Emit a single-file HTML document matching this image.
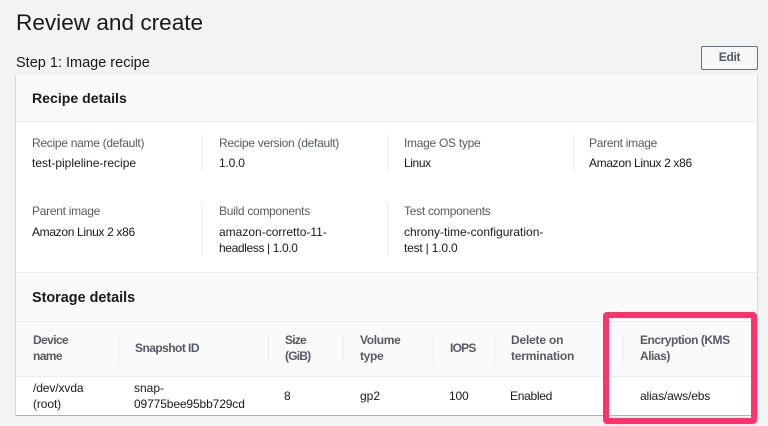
<!DOCTYPE html>
<html><head><meta charset="utf-8"><style>
html,body{margin:0;padding:0}
body{width:768px;height:426px;overflow:hidden;background:#f2f3f3;position:relative;font-family:"Liberation Sans",sans-serif;color:#16191f}
#p{position:absolute;left:0;top:0;width:768px;height:426px;filter:blur(.35px)}
.t{position:absolute;white-space:nowrap;font-size:12px;line-height:16px}
.l{color:#545b64;letter-spacing:-.28px}
.h{font-weight:700;color:#545b64;font-size:12px}
.b{position:absolute;background:#eaeded}
.v{position:absolute;width:1px;background:#eaeded}
</style></head><body><div id="p">
<div class="t" style="left:16px;top:9px;font-size:22.6px;line-height:28px">Review and create</div>
<div class="t" style="left:16px;top:54px;font-size:14.5px;line-height:18px">Step 1: Image recipe</div>
<div style="position:absolute;left:701px;top:46px;width:55px;height:22px;border:1px solid #687078;border-radius:2px;background:#f5f6f6"></div>
<div class="t h" style="left:701px;top:49px;width:57px;text-align:center;letter-spacing:-.3px">Edit</div>

<div style="position:absolute;left:15px;top:75px;width:1px;height:341px;background:#d5dbdb"></div>
<div style="position:absolute;left:16px;top:75px;width:742px;height:341px;background:#fff;border-right:1px solid #d5dbdb;border-bottom:1px solid #aab7b8;box-sizing:border-box"></div>
<div style="position:absolute;left:16px;top:75px;width:741px;height:46px;background:#fafafa"></div>
<div class="b" style="left:16px;top:121px;width:741px;height:1px"></div>
<div style="position:absolute;left:16px;top:273px;width:741px;height:103px;background:#fafafa"></div>
<div class="b" style="left:16px;top:272px;width:741px;height:1px"></div>
<div class="b" style="left:16px;top:321px;width:741px;height:1px"></div>
<div class="b" style="left:16px;top:376px;width:741px;height:1px"></div>

<div class="t" style="left:32px;top:89px;font-size:14.1px;line-height:18px;font-weight:700">Recipe details</div>
<div class="t" style="left:32px;top:289px;font-size:14.4px;line-height:18px;font-weight:700">Storage details</div>

<div class="v" style="left:201px;top:135px;height:36px"></div>
<div class="v" style="left:387px;top:135px;height:36px"></div>
<div class="v" style="left:573px;top:135px;height:36px"></div>
<div class="v" style="left:201px;top:203px;height:53px"></div>
<div class="v" style="left:387px;top:203px;height:53px"></div>

<div class="t l" style="left:32px;top:135px">Recipe name (default)</div>
<div class="t" style="left:32px;top:155px">test-pipleline-recipe</div>
<div class="t l" style="left:219px;top:135px">Recipe version (default)</div>
<div class="t" style="left:219px;top:155px;letter-spacing:-.2px">1.0.0</div>
<div class="t l" style="left:404px;top:135px">Image OS type</div>
<div class="t" style="left:404px;top:155px;letter-spacing:-.4px">Linux</div>
<div class="t l" style="left:589px;top:135px">Parent image</div>
<div class="t" style="left:589px;top:155px;letter-spacing:-.33px">Amazon Linux 2 x86</div>

<div class="t l" style="left:32px;top:203px">Parent image</div>
<div class="t" style="left:32px;top:224px;letter-spacing:-.33px">Amazon Linux 2 x86</div>
<div class="t l" style="left:219px;top:203px">Build components</div>
<div class="t" style="left:219px;top:224px">amazon-corretto-11-</div>
<div class="t" style="left:219px;top:240px;letter-spacing:-.37px">headless | 1.0.0</div>
<div class="t l" style="left:404px;top:203px">Test components</div>
<div class="t" style="left:404px;top:224px">chrony-time-configuration-</div>
<div class="t" style="left:404px;top:240px;letter-spacing:-.2px">test | 1.0.0</div>

<div class="v" style="left:118px;top:335px;height:27px"></div>
<div class="v" style="left:268px;top:335px;height:27px"></div>
<div class="v" style="left:343px;top:335px;height:27px"></div>
<div class="v" style="left:433px;top:335px;height:27px"></div>
<div class="v" style="left:494px;top:335px;height:27px"></div>
<div class="v" style="left:623px;top:335px;height:27px"></div>

<div class="t h" style="left:33px;top:332px;letter-spacing:-.6px">Device</div>
<div class="t h" style="left:33px;top:348px;letter-spacing:-.6px">name</div>
<div class="t h" style="left:135px;top:340px;letter-spacing:-.55px">Snapshot ID</div>
<div class="t h" style="left:285px;top:332px;letter-spacing:-.8px">Size</div>
<div class="t h" style="left:285px;top:348px;letter-spacing:-.8px">(GiB)</div>
<div class="t h" style="left:360px;top:332px;letter-spacing:-.33px">Volume</div>
<div class="t h" style="left:360px;top:348px;letter-spacing:-.33px">type</div>
<div class="t h" style="left:450px;top:340px;letter-spacing:-.75px">IOPS</div>
<div class="t h" style="left:511px;top:332px;letter-spacing:-.2px">Delete on</div>
<div class="t h" style="left:511px;top:348px;letter-spacing:-.2px">termination</div>
<div class="t h" style="left:640px;top:332px;letter-spacing:-.47px">Encryption (KMS</div>
<div class="t h" style="left:640px;top:348px;letter-spacing:-.47px">Alias)</div>

<div class="t" style="left:33px;top:380px;letter-spacing:-.1px">/dev/xvda</div>
<div class="t" style="left:33px;top:396px;letter-spacing:-.1px">(root)</div>
<div class="t" style="left:134px;top:380px">snap-</div>
<div class="t" style="left:134px;top:396px;letter-spacing:-.12px">09775bee95bb729cd</div>
<div class="t" style="left:284px;top:388px">8</div>
<div class="t" style="left:360px;top:388px">gp2</div>
<div class="t" style="left:449px;top:388px;letter-spacing:-.2px">100</div>
<div class="t" style="left:510px;top:388px;letter-spacing:-.3px">Enabled</div>
<div class="t" style="left:640px;top:388px;letter-spacing:-.15px">alias/aws/ebs</div>

<div style="position:absolute;left:603px;top:312px;width:154px;height:112px;box-sizing:border-box;border:6px solid #ff3369;border-radius:4px"></div>
</div></body></html>
